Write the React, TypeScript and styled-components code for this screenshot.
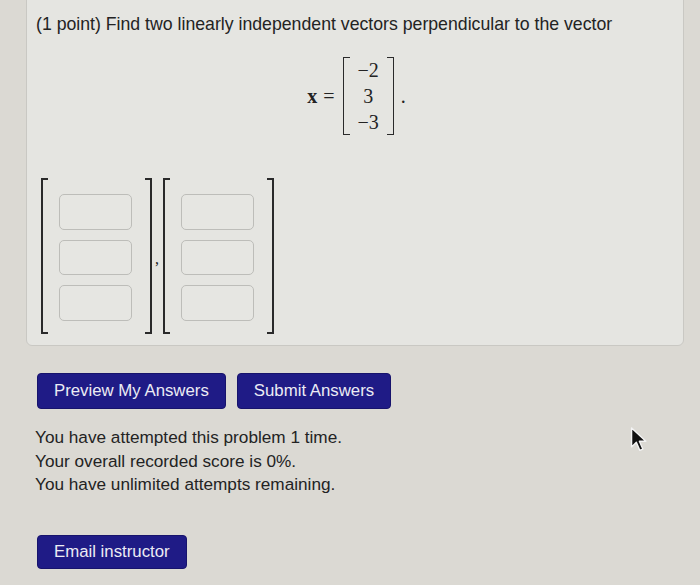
import React from 'react';
import styled, { createGlobalStyle } from 'styled-components';

const GlobalStyle = createGlobalStyle`
	html, body {
		margin: 0;
		padding: 0;
		background: #dbd9d3;
	}
	body {
		font-family: 'Liberation Sans', Arial, sans-serif;
		color: #232323;
		overflow: hidden;
	}
`;

const Page = styled.div`
	position: relative;
	width: 700px;
	height: 585px;
	overflow: hidden;
`;

const ProblemBox = styled.div`
	margin: -12px 0 0 26px;
	width: 658px;
	padding: 24px 9px 11px 9px;
	background: #e5e5e1;
	border: 1px solid #c9c8c3;
	border-radius: 6px;
	box-sizing: border-box;
`;

const Title = styled.p`
	margin: 0;
	font-size: 17.7px;
	line-height: 22px;
`;

const Display = styled.div`
	display: flex;
	justify-content: center;
	align-items: center;
	margin: 22px 0 0 0;
	height: 78px;
	font-family: 'Liberation Serif', 'Times New Roman', serif;
	font-size: 20px;
`;

const VarX = styled.span`
	font-weight: bold;
	margin: 0 6px 0 3px;
`;

const Equals = styled.span`
	margin-right: 8px;
`;

const Bracket = styled.span<{ $side: 'left' | 'right'; $thick?: number; $w?: number }>`
	align-self: stretch;
	width: ${p => p.$w ?? 5}px;
	border: ${p => p.$thick ?? 1.5}px solid #2a2a2a;
	${p => (p.$side === 'left' ? 'border-right: none;' : 'border-left: none;')}
`;

const MathColumn = styled.div`
	display: flex;
	flex-direction: column;
	align-items: center;
	justify-content: space-between;
	padding: 0 8px;
	line-height: 26px;
`;

const Period = styled.span`
	margin-left: 7px;
	align-self: center;
`;

const Answers = styled.div`
	display: flex;
	align-items: stretch;
	margin: 43px 0 0 5px;
	height: 156px;
`;

const Vector = styled.div`
	display: flex;
	align-items: stretch;
`;

const InputColumn = styled.div`
	display: flex;
	flex-direction: column;
	gap: 10px;
	padding: 16px 13px 13px 11px;
`;

const Entry = styled.input`
	width: 73px;
	height: 36px;
	box-sizing: border-box;
	border: 1.5px solid #bdbdb9;
	border-radius: 5px;
	background: #e6e6e2;
	margin: 0;
	padding: 0;
`;

const Comma = styled.span`
	font-family: 'Liberation Serif', serif;
	font-size: 16px;
	align-self: center;
	margin: 6px 4px 0 3px;
	line-height: 1;
`;

const ButtonRow = styled.div`
	display: flex;
	gap: 11px;
	margin: 27px 0 0 37px;
`;

const Button = styled.button<{ $h?: number }>`
	height: ${p => p.$h ?? 36}px;
	padding: 0 16px;
	background: #1f1b86;
	color: #ececf4;
	border: 1px solid #17136c;
	border-radius: 4px;
	font-family: 'Liberation Sans', Arial, sans-serif;
	font-size: 16.8px;
	cursor: pointer;
`;

const Status = styled.div`
	margin: 17px 0 0 35px;
	font-size: 17.2px;
	line-height: 23.5px;
	& p {
		margin: 0;
	}
`;

const EmailRow = styled.div`
	margin: 38px 0 0 37px;
`;

const Cursor = styled.svg`
	position: absolute;
	left: 629px;
	top: 426px;
`;

const mathEntries = ['\u22122', '3', '\u22123'];

function AnswerVector() {
	return (
		<Vector>
			<Bracket $side="left" $thick={2} />
			<InputColumn>
				<Entry />
				<Entry />
				<Entry />
			</InputColumn>
			<Bracket $side="right" $thick={2} />
		</Vector>
	);
}

export default function App() {
	return (
		<Page>
			<GlobalStyle />
			<ProblemBox>
				<Title>(1 point) Find two linearly independent vectors perpendicular to the vector</Title>
				<Display>
					<VarX>x</VarX>
					<Equals>=</Equals>
					<Bracket $side="left" $w={6} />
					<MathColumn>
						{mathEntries.map(v => (
							<span key={v}>{v}</span>
						))}
					</MathColumn>
					<Bracket $side="right" $w={6} />
					<Period>.</Period>
				</Display>
				<Answers>
					<AnswerVector />
					<Comma>,</Comma>
					<AnswerVector />
				</Answers>
			</ProblemBox>
			<ButtonRow>
				<Button>Preview My Answers</Button>
				<Button>Submit Answers</Button>
			</ButtonRow>
			<Status>
				<p>You have attempted this problem 1 time.</p>
				<p>Your overall recorded score is 0%.</p>
				<p>You have unlimited attempts remaining.</p>
			</Status>
			<EmailRow>
				<Button $h={34}>Email instructor</Button>
			</EmailRow>
			<Cursor width="19" height="28" viewBox="0 0 22 32">
				<path
					d="M3 2 L3 24 L8.5 18.5 L12.5 28 L16 26.5 L12 17.5 L19.5 17.5 Z"
					fill="#111"
					stroke="#f4f4f4"
					strokeWidth="1.6"
					strokeLinejoin="round"
				/>
			</Cursor>
		</Page>
	);
}
